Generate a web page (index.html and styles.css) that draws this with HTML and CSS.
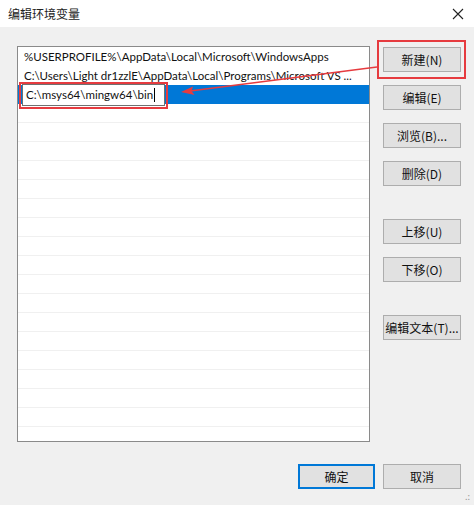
FILE: index.html
```html
<!DOCTYPE html>
<html lang="zh-CN">
<head>
  <meta charset="UTF-8">
  <title>编辑环境变量</title>
  <link rel="stylesheet" href="styles.css">
</head>
<body>
  <div class="window">
    <div class="titlebar">
      <span class="title">编辑环境变量</span>
      <svg class="close" width="12" height="12" viewBox="0 0 12 12">
        <path d="M1 1 L11 11 M11 1 L1 11" stroke="#222" stroke-width="1.1" fill="none"/>
      </svg>
    </div>
    <div class="content">
      <div class="main">
        <div class="list">
          <div class="row">%USERPROFILE%\AppData\Local\Microsoft\WindowsApps</div>
          <div class="row">C:\Users\Light dr1zzlE\AppData\Local\Programs\Microsoft VS ...</div>
          <div class="row selected">
            <span class="edit">C:\msys64\mingw64\bin<span class="caret"></span></span>
          </div>
          <div class="row line"></div>
          <div class="row line"></div>
          <div class="row line"></div>
          <div class="row line"></div>
          <div class="row line"></div>
          <div class="row line"></div>
          <div class="row line"></div>
          <div class="row line"></div>
          <div class="row line"></div>
          <div class="row line"></div>
          <div class="row line"></div>
          <div class="row line"></div>
          <div class="row line"></div>
          <div class="row line"></div>
          <div class="row line"></div>
          <div class="row line"></div>
          <div class="row line"></div>
        </div>
        <div class="side">
          <button class="btn">新建(N)</button>
          <button class="btn">编辑(E)</button>
          <button class="btn">浏览(B)...</button>
          <button class="btn">删除(D)</button>
          <button class="btn group">上移(U)</button>
          <button class="btn">下移(O)</button>
          <button class="btn group">编辑文本(T)...</button>
        </div>
      </div>
      <div class="footer">
        <button class="btn default">确定</button>
        <button class="btn">取消</button>
      </div>
    </div>
    <span class="grip">.:</span>

    <!-- 红色标注 -->
    <svg class="annot" width="474" height="505" viewBox="0 0 474 505">
      <rect x="20" y="83" width="147" height="25" fill="none" stroke="#e63b3f" stroke-width="2"/>
      <rect x="378" y="41" width="87" height="37" fill="none" stroke="#e63b3f" stroke-width="2"/>
      <line x1="377" y1="67" x2="190" y2="91" stroke="#e63b3f" stroke-width="1.6"/>
      <path d="M181 92 L193 86.5 L191.5 91 L194.5 95 Z" fill="#e63b3f"/>
    </svg>
  </div>
</body>
</html>
```

FILE: styles.css
```css
body { margin: 0; font-family: "Noto Sans CJK SC", "Noto Sans", sans-serif; font-size: 12px; color: #000; }
.window { position: relative; width: 474px; height: 505px; background: #f0f0f0; overflow: hidden; }
.titlebar { height: 27px; background: #fff; display: flex; align-items: center; justify-content: space-between; padding: 0 8px 0 8px; box-sizing: border-box; }
.title { font-size: 12px; color: #222; }
.close { margin-right: 2px; }
.content { padding: 19px 0 0 17px; }
.main { display: flex; gap: 13px; }
.list { width: 353px; height: 396px; box-sizing: border-box; border: 1px solid #8a8a8a; background: #fff; overflow: hidden; }
.row { height: 19px; line-height: 19px; padding-left: 6px; box-sizing: border-box; white-space: nowrap; font-family: Lato, "Noto Sans CJK SC", sans-serif; font-size: 11.5px; color: #111; position: relative; }
.row.line { border-bottom: 1px solid #f0f0f0; }
.row.selected { background: #0078d7; }
.edit { position: absolute; left: 4px; top: -1px; width: 143px; height: 22px; box-sizing: border-box; border: 1px solid #707070; background: #fff; padding-left: 3px; line-height: 20px; }
.caret { display: inline-block; width: 1px; height: 14px; background: #000; vertical-align: -3px; margin-left: 1px; }
.side { display: flex; flex-direction: column; gap: 13px; padding-top: 1px; }
.btn { width: 78px; height: 25px; background: #e1e1e1; border: 1px solid #adadad; font-family: "Noto Sans CJK SC", "Noto Sans", sans-serif; font-size: 12px; color: #111; padding: 0; }
.btn.group { margin-top: 20px; }
.footer { display: flex; justify-content: flex-end; gap: 8px; padding: 22px 13px 0 0; }
.btn.default { width: 77px; border: 2px solid #0078d7; }
.grip { position: absolute; right: 4px; bottom: 2px; font-size: 9px; color: #999; }
.annot { position: absolute; left: 0; top: 0; }
```
